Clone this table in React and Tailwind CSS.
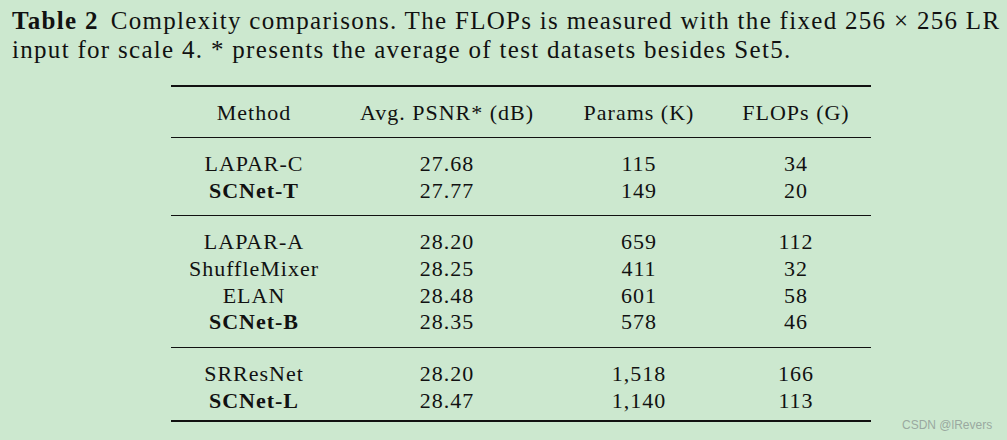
const groups = [
  [
    { name: "LAPAR-C", psnr: "27.68", params: "115", flops: "34" },
    { name: "SCNet-T", psnr: "27.77", params: "149", flops: "20", bold: true },
  ],
  [
    { name: "LAPAR-A", psnr: "28.20", params: "659", flops: "112" },
    { name: "ShuffleMixer", psnr: "28.25", params: "411", flops: "32" },
    { name: "ELAN", psnr: "28.48", params: "601", flops: "58" },
    { name: "SCNet-B", psnr: "28.35", params: "578", flops: "46", bold: true },
  ],
  [
    { name: "SRResNet", psnr: "28.20", params: "1,518", flops: "166" },
    { name: "SCNet-L", psnr: "28.47", params: "1,140", flops: "113", bold: true },
  ],
];

const cols = "grid grid-cols-[166px_220px_164px_150px] text-center";

export default function App() {
  return (
    <div className="relative w-[1007px] h-[440px] bg-[#cce8cf] text-[#111] font-['Liberation_Serif',serif] overflow-hidden">
      {/* caption */}
      <div className="pl-[12px] pt-[6px] text-[25px] leading-[29px] tracking-[1.3px] whitespace-nowrap">
        <span className="font-bold">Table 2</span>
        <span className="ml-[12px]">
          Complexity comparisons. The FLOPs is measured with the fixed 256 × 256 LR
        </span>
        <br />
        input for scale 4. * presents the average of test datasets besides Set5.
      </div>

      {/* table */}
      <div className="ml-[171px] mt-[21px] w-[700px] text-[22px] tracking-[1px]">
        <div className="border-t-2 border-[#111]" />
        <div className={`${cols} h-[50px] items-center`}>
          <div>Method</div>
          <div>Avg. PSNR* (dB)</div>
          <div>Params (K)</div>
          <div>FLOPs (G)</div>
        </div>
        {groups.map((rows, gi) => (
          <div
            key={gi}
            className={`border-t border-[#111] pt-[13px] ${gi === 2 ? "pb-[5px]" : "pb-[11px]"}`}
          >
            {rows.map((r) => (
              <div key={r.name} className={`${cols} h-[26.7px] leading-[26.7px]`}>
                <div className={r.bold ? "font-bold" : ""}>{r.name}</div>
                <div>{r.psnr}</div>
                <div>{r.params}</div>
                <div>{r.flops}</div>
              </div>
            ))}
          </div>
        ))}
        <div className="border-t-2 border-[#111]" />
      </div>

      <div className="absolute left-[902px] top-[416px] text-[12px] text-[#9aa8a0] font-['Liberation_Sans',sans-serif]">
        CSDN @lRevers
      </div>
    </div>
  );
}
